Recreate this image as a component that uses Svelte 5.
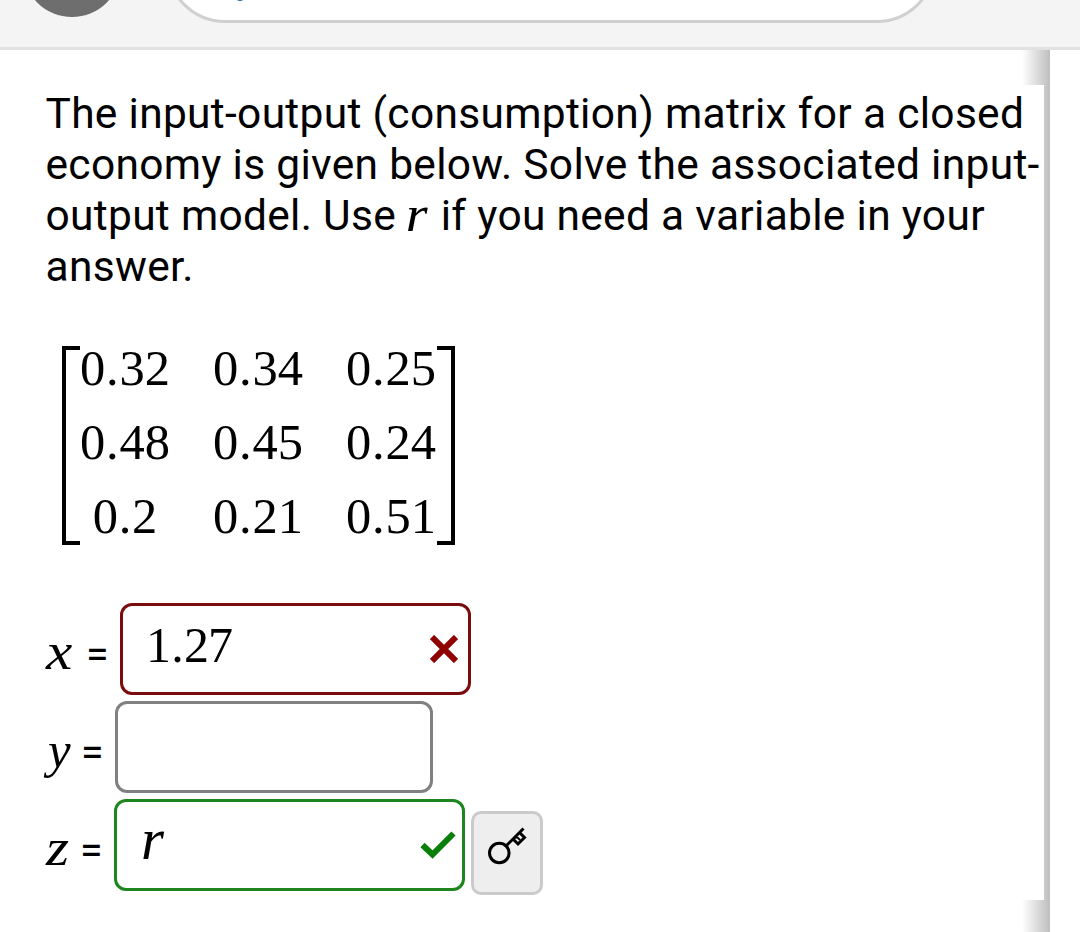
<script lang="ts">
	const matrix = [
		['0.32', '0.34', '0.25'],
		['0.48', '0.45', '0.24'],
		['0.2', '0.21', '0.51']
	];

	let x = $state('1.27');
	let z = $state('r');
</script>

{#snippet num(value: string)}
	{@const [whole, fraction] = value.split('.')}
	{whole}<span class="point">.</span>{fraction}
{/snippet}

<header class="toolbar">
	<div class="avatar"></div>
	<div class="address"><span class="descender"></span></div>
</header>

<main class="page">
	<section class="question">
		<p class="prompt">
			The input-output (consumption) matrix for a closed<br />
			economy is given below. Solve the associated input-<br />
			output model. Use <i class="var">r</i> if you need a variable in your<br />
			answer.
		</p>

		<div class="matrix">
			{#each matrix as row}
				{#each row as value}
					<span>{@render num(value)}</span>
				{/each}
			{/each}
		</div>

		<div class="answers">
			<div class="answer x">
				<i class="name">x</i>
				<span class="equals">=</span>
				<div class="field wrong">
					<span class="value">{@render num(x)}</span>
					<svg class="cross" width="28" height="28" viewBox="0 0 28 28">
						<path d="M2 2 26 26M26 2 2 26" />
					</svg>
				</div>
			</div>
			<div class="answer y">
				<i class="name">y</i>
				<span class="equals">=</span>
				<div class="field"></div>
			</div>
			<div class="answer z">
				<i class="name">z</i>
				<span class="equals">=</span>
				<div class="field correct">
					<i class="value">{z}</i>
					<svg class="check" width="36" height="28" viewBox="0 0 36 28">
						<path d="M2.5 14 12.5 23.5 33.5 2.5" />
					</svg>
				</div>
				<button type="button" aria-label="Show answer key">
					<svg width="40" height="38" viewBox="0 0 40 38">
						<circle cx="12.3" cy="26" r="9.8" />
						<path d="M19 19 36.5 1.5M32.5 5.5 37.5 10.5 31 17 26 12" />
						<path d="M27.5 10.5 30.5 10.5 33 13" stroke-width="2" />
					</svg>
				</button>
			</div>
		</div>
	</section>
</main>

<style>
	:global(body) {
		background: #fff;
		color: #000;
		font-family: Roboto, sans-serif;
		overflow: hidden;
	}

	.toolbar {
		box-sizing: border-box;
		height: 50px;
		display: flex;
		align-items: flex-end;
		border-bottom: 3px solid #e1e1e1;
		background: #f4f4f4;
		overflow: hidden;
	}

	.avatar {
		flex: none;
		width: 98px;
		height: 98px;
		margin: 0 47px 30px 23px;
		border-radius: 50%;
		background: #6e6e6e;
	}

	.address {
		box-sizing: border-box;
		flex: none;
		display: flex;
		align-items: flex-end;
		width: 770px;
		height: 118px;
		margin: 0 0 24px -2px;
		padding: 0 0 19px 67px;
		border: 3px solid #d0d0d0;
		border-radius: 59px;
		background: #fff;
	}

	.descender {
		width: 8px;
		height: 5px;
		border-radius: 0 0 4px 4px;
		background: #3567ad;
	}

	.page {
		box-sizing: border-box;
		width: 1050px;
		height: 882px;
		padding: 35px 6px 32px 0;
		background: linear-gradient(to left, #bebebe, #fff 28px);
	}

	.question {
		box-sizing: border-box;
		height: 815px;
		padding: 3px 0 0 45px;
		background: #fff;
	}

	.prompt {
		margin: 0;
		padding-left: 0.5px;
		font-size: 42.5px;
		line-height: 51px;
		letter-spacing: 0.3px;
		white-space: nowrap;
	}

	.var,
	.name,
	.value,
	.matrix {
		font-family: 'Liberation Serif', serif;
	}

	.var {
		display: inline-block;
		width: 23px;
		font-size: 51px;
		line-height: 40px;
		transform: translateY(1px) scaleX(1.1);
	}

	.point {
		display: inline-block;
		width: 0.278em;
		text-align: center;
	}

	.matrix {
		position: relative;
		box-sizing: border-box;
		display: grid;
		grid-template-columns: repeat(3, 90px);
		grid-auto-rows: 74px;
		column-gap: 43px;
		width: 393px;
		height: 199px;
		margin: 54px 0 0 17px;
		padding-left: 18px;
		font-size: 50.5px;
		line-height: 44px;
		text-align: center;
		white-space: nowrap;
	}

	.matrix::before,
	.matrix::after {
		content: '';
		position: absolute;
		top: 0;
		bottom: 0;
		box-sizing: border-box;
		width: 18px;
		border: 4px solid #000;
	}

	.matrix::before {
		left: 0;
		border-right: 0;
	}

	.matrix::after {
		right: 0;
		border-left: 0;
	}

	.answers {
		display: grid;
		gap: 6px;
		margin: 58px 0 0 1px;
	}

	.answer {
		display: flex;
		height: 92px;
	}

	.name {
		width: 40px;
		font-size: 52px;
		line-height: 98px;
		transform: scaleX(1.14);
		transform-origin: left;
	}

	.equals {
		width: 34px;
		font-size: 41px;
		line-height: 103px;
	}

	.y .name {
		width: 35px;
		font-size: 50px;
		text-indent: 2px;
		transform: scaleX(1.02);
	}

	.y .equals {
		width: 34px;
	}

	.z .name {
		width: 34px;
	}

	.z .equals {
		width: 34px;
	}

	.field {
		box-sizing: border-box;
		display: flex;
		justify-content: space-between;
		width: 318px;
		height: 92px;
		border: 3px solid #808080;
		border-radius: 12px;
	}

	.wrong,
	.correct {
		width: 351px;
	}

	.wrong {
		padding: 0 10px 0 23px;
		border-color: #7b0c0c;
	}

	.correct {
		padding: 0 6px 0 24px;
		border-color: #1f861f;
	}

	.value {
		font-size: 50px;
		line-height: 79px;
		letter-spacing: -0.9px;
		white-space: nowrap;
	}

	.correct .value {
		font-size: 59px;
		line-height: 74px;
	}

	.cross,
	.check {
		fill: none;
		stroke-width: 6;
	}

	.cross {
		margin-top: 29px;
		stroke: #900000;
	}

	.check {
		margin-top: 29px;
		stroke: #087f08;
	}

	button {
		box-sizing: border-box;
		width: 72px;
		height: 84px;
		margin: 12px 0 0 6px;
		padding: 0 0 14px;
		border: 3px solid #cacaca;
		border-radius: 10px;
		background: #eee;
		line-height: 0;
	}

	button svg {
		fill: none;
		stroke: #000;
		stroke-width: 3;
	}
</style>
